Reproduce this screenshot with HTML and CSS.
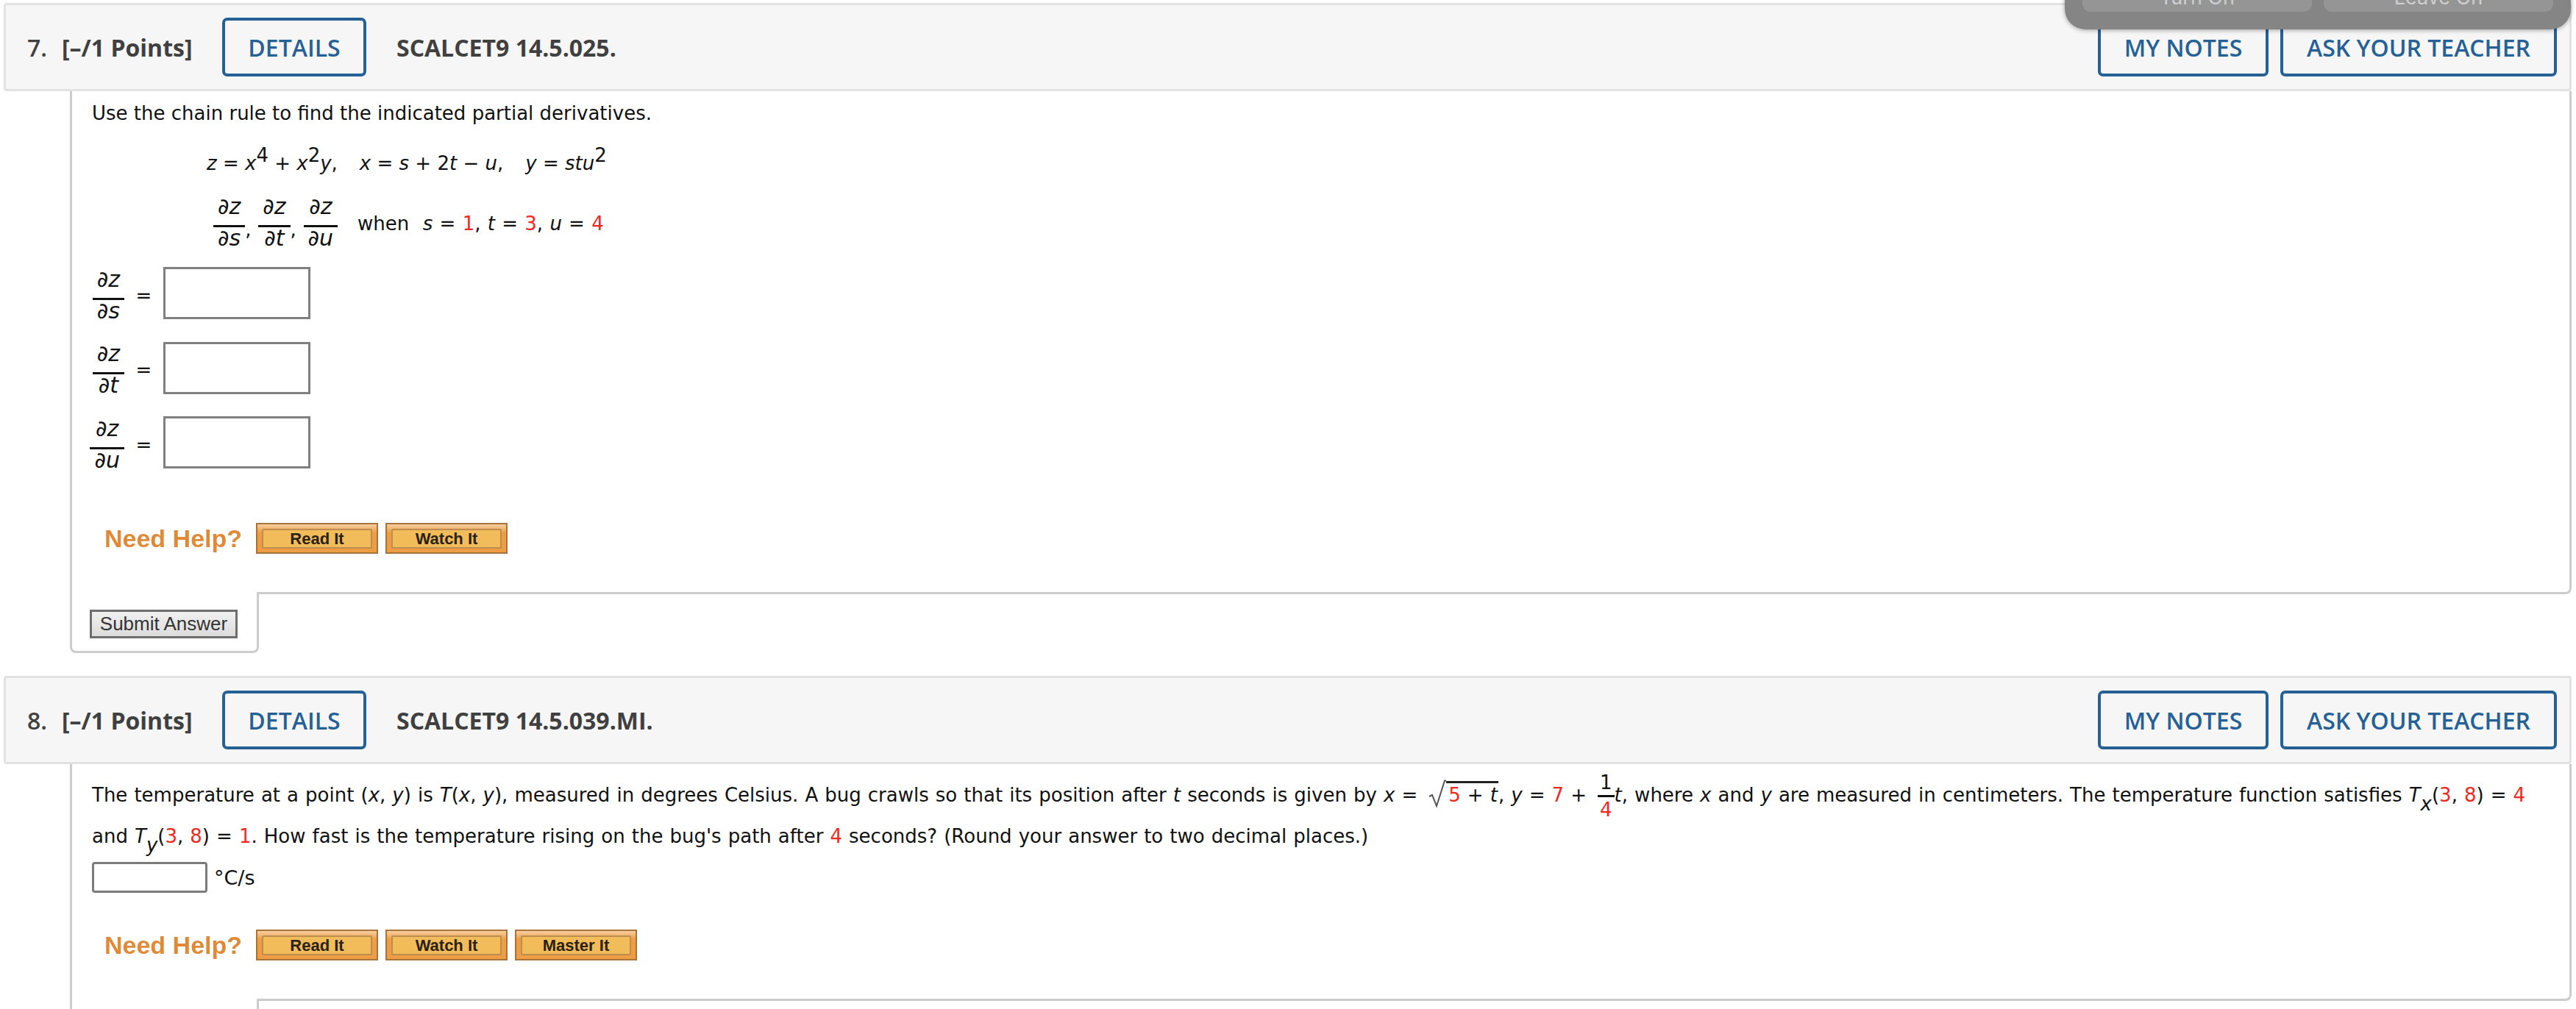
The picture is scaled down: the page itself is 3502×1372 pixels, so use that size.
FILE: index.html
```html
<!DOCTYPE html>
<html lang="en">
<head>
  <meta charset="UTF-8">
  <meta name="viewport" content="width=device-width, initial-scale=1.0">
  <title>SCALCET9 14.5 Assignment</title>
  <link rel="stylesheet" href="styles.css">
</head>
<body>
  <div class="question">
    <div class="q-head">
      <span class="q-num">7.</span>
      <span class="q-points">[&ndash;/1 Points]</span>
      <a class="head-btn details-btn">DETAILS</a>
      <span class="q-code">SCALCET9 14.5.025.</span>
      <a class="head-btn notes-btn">MY NOTES</a>
      <a class="head-btn ask-btn">ASK YOUR TEACHER</a>
    </div>
    <div class="q-body">
      <p class="intro">Use the chain rule to find the indicated partial derivatives.</p>
      <p class="formula"><i>z</i> = <i>x</i><sup>4</sup> + <i>x</i><sup>2</sup><i>y</i>,<span class="sep"></span><i>x</i> = <i>s</i> + 2<i>t</i> &minus; <i>u</i>,<span class="sep"></span><i>y</i> = <i>stu</i><sup>2</sup></p>
      <div class="given">
        <span class="frac"><i class="num">&part;z</i><i class="den">&part;s</i></span><span class="comma">,</span>
        <span class="frac"><i class="num">&part;z</i><i class="den">&part;t</i></span><span class="comma">,</span>
        <span class="frac"><i class="num">&part;z</i><i class="den">&part;u</i></span>
        <span class="when">when&nbsp; <i>s</i> = <b>1</b>, <i>t</i> = <b>3</b>, <i>u</i> = <b>4</b></span>
      </div>
      <div class="answers">
        <div class="ans-row">
          <span class="ans-label"><span class="frac"><i class="num">&part;z</i><i class="den">&part;s</i></span></span>
          <span class="eq">=</span>
          <input class="ans-box" type="text">
        </div>
        <div class="ans-row">
          <span class="ans-label"><span class="frac"><i class="num">&part;z</i><i class="den">&part;t</i></span></span>
          <span class="eq">=</span>
          <input class="ans-box" type="text">
        </div>
        <div class="ans-row">
          <span class="ans-label"><span class="frac"><i class="num">&part;z</i><i class="den">&part;u</i></span></span>
          <span class="eq">=</span>
          <input class="ans-box" type="text">
        </div>
      </div>
      <div class="help help-first">
        <span class="help-label">Need Help?</span>
        <span class="help-btn"><span>Read It</span></span>
        <span class="help-btn"><span>Watch It</span></span>
      </div>
    </div>
    <div class="submit-tab">
      <button class="submit-btn" type="button">Submit Answer</button>
    </div>
  </div>

  <div class="question second">
    <div class="q-head">
      <span class="q-num">8.</span>
      <span class="q-points">[&ndash;/1 Points]</span>
      <a class="head-btn details-btn">DETAILS</a>
      <span class="q-code">SCALCET9 14.5.039.MI.</span>
      <a class="head-btn notes-btn">MY NOTES</a>
      <a class="head-btn ask-btn">ASK YOUR TEACHER</a>
    </div>
    <div class="q-body">
      <p class="prose">The temperature at a point (<i>x</i>, <i>y</i>) is <i>T</i>(<i>x</i>, <i>y</i>), measured in degrees Celsius. A bug crawls so that its position after <i>t</i> seconds is given by <i>x</i> = <span class="root"><svg class="root-sign" width="24" height="38" viewBox="0 0 24 38"><path d="M1 23 L5 21 L11 36 L22 1.5 L24 1.5" fill="none" stroke="#555" stroke-width="2"/></svg><span class="root-body"><b>5</b> + <i>t</i></span></span>, <i>y</i> = <b>7</b> + <span class="frac small"><span class="num">1</span><b class="den">4</b></span><i>t</i>, where <i>x</i> and <i>y</i> are measured in centimeters. The temperature function satisfies <i>T</i><sub><i>x</i></sub>(<b>3</b>, <b>8</b>) = <b>4</b><br>and <i>T</i><sub><i>y</i></sub>(<b>3</b>, <b>8</b>) = <b>1</b>. How fast is the temperature rising on the bug's path after <b>4</b> seconds? (Round your answer to two decimal places.)</p>
      <div class="unit-row">
        <input class="unit-box" type="text">
        <span class="unit">&deg;C/s</span>
      </div>
      <div class="help help-second">
        <span class="help-label">Need Help?</span>
        <span class="help-btn"><span>Read It</span></span>
        <span class="help-btn"><span>Watch It</span></span>
        <span class="help-btn"><span>Master It</span></span>
      </div>
    </div>
    <div class="submit-tab tab-clipped"></div>
  </div>

  <!-- browser popup hanging over the top right corner -->
  <div class="popup">
    <span class="popup-btn">Turn On</span>
    <span class="popup-btn">Leave On</span>
  </div>
</body>
</html>
```

FILE: styles.css
```css
body {
  margin: 0;
  width: 3502px;
  height: 1372px;
  padding-top: 4px;
  box-sizing: border-box;
  overflow: hidden;
  position: relative;
  background: white;
  color: #111;
  font-family: "DejaVu Sans", Verdana, sans-serif;
  font-size: 26px;
}

p {
  margin: 0;
}

.question {
  margin: 0 6px 0 5px;
}

.second {
  margin-top: 31px;
}

/* header bar */
.q-head {
  display: flex;
  align-items: center;
  height: 120px;
  box-sizing: border-box;
  padding: 0 17px 0 29px;
  background: #f6f6f6;
  border: 3px solid #e2e2e2;
  border-radius: 4px;
  color: #404040;
  font-family: "Open Sans", sans-serif;
  font-size: 32px;
  font-weight: 600;
}

.q-num {
  width: 47px;
}

.q-points {
  width: 218px;
  font-weight: 700;
}

.head-btn {
  display: flex;
  align-items: center;
  justify-content: center;
  height: 80px;
  box-sizing: border-box;
  border: 4px solid #266196;
  border-radius: 7px;
  color: #266196;
}

.details-btn {
  width: 196px;
}

.q-code {
  flex: 1;
  margin-left: 41px;
  font-weight: 700;
}

.notes-btn {
  width: 232px;
  margin-right: 16px;
}

.ask-btn {
  width: 376px;
}

/* question panel */
.q-body {
  margin-left: 90px;
  padding: 14px 0 52px 27px;
  border: 3px solid #cccccc;
  border-top: none;
  border-radius: 0 0 8px 0;
}

.intro {
  line-height: 32px;
}

.formula {
  margin: 36px 0 0 156px;
  line-height: 32px;
}

.sep {
  display: inline-block;
  width: 30px;
}

sup {
  font-size: 26px;
  line-height: 0;
  vertical-align: 11px;
}

sub {
  font-size: 26px;
  line-height: 0;
  vertical-align: -12px;
}

b {
  color: #f0291e;
  font-weight: normal;
}

.frac {
  display: inline-flex;
  flex-direction: column;
  align-items: stretch;
  font-size: 30px;
  text-align: center;
}

.frac .num {
  padding: 0 6px 6px;
  line-height: 39px;
  border-bottom: 3px solid #111;
}

.frac .den {
  padding: 0 6px;
  line-height: 30px;
}

.given {
  display: flex;
  align-items: center;
  height: 81px;
  margin: 28px 0 0 165px;
}

.given .frac {
  margin-bottom: 13px;
}

.comma {
  width: 18px;
  padding-top: 10px;
}

.when {
  margin-left: 27px;
  padding-bottom: 6px;
  word-spacing: 1px;
}

.answers {
  display: flex;
  flex-direction: column;
  gap: 30.5px;
  margin-top: 16px;
}

.ans-row {
  display: flex;
  align-items: center;
  height: 71px;
}

.ans-label {
  display: flex;
  justify-content: flex-end;
  width: 44px;
}

.eq {
  width: 53px;
  margin-top: 6px;
  text-align: center;
}

.ans-box {
  width: 200px;
  height: 71px;
  box-sizing: border-box;
  margin: 0;
  border: 3px solid #808080;
  background: white;
}

/* need help strip */
.help {
  display: flex;
  align-items: center;
  gap: 10px;
  margin-left: 17px;
}

.help-first {
  margin-top: 74px;
}

.help-second {
  margin-top: 50px;
}

.help-label {
  width: 196px;
  color: #e08a38;
  font-family: "Liberation Sans", Arial, sans-serif;
  font-size: 34px;
  font-weight: bold;
  filter: blur(0.4px);
}

.help-btn {
  display: flex;
  width: 166px;
  height: 42px;
  box-sizing: border-box;
  padding: 6px 6px 5px;
  border: 2px solid #a87338;
  background: linear-gradient(#f6cfa0, #ee9d44 30%);
  font-family: "Liberation Sans", Arial, sans-serif;
  font-size: 22px;
  font-weight: bold;
  color: #2a2110;
}

.help-btn span {
  flex: 1;
  display: flex;
  align-items: center;
  justify-content: center;
  border: 2px solid #bd8c4f;
  border-radius: 2px;
  background: #f3bc5b;
}

/* notch with the submit button */
.submit-tab {
  position: relative;
  width: 257px;
  box-sizing: border-box;
  margin: -3px 0 0 90px;
  padding: 24px 0 17px 24px;
  background: white;
  border: 3px solid #cccccc;
  border-top: none;
  border-radius: 0 0 8px 8px;
}

.tab-clipped {
  height: 90px;
}

.submit-btn {
  display: block;
  width: 201px;
  height: 39px;
  padding: 0;
  border: 3px solid #6e6e6e;
  background: linear-gradient(#f0f0f0, #dcdcdc);
  color: #333;
  font-family: "Liberation Sans", Arial, sans-serif;
  font-size: 26px;
}

/* second question text */
.prose {
  line-height: 56px;
  word-spacing: 0.8px;
}

.root {
  display: inline-block;
  margin-left: 8px;
  line-height: 32px;
}

.root-sign {
  vertical-align: -8px;
  margin-left: -2px;
}

.root-body {
  display: inline-block;
  padding: 0 1px 0 3px;
  border-top: 3px solid #222;
}

.small {
  font-size: 26px;
  vertical-align: middle;
  margin: -20px 0 -20px 6px;
}

.small .num,
.small .den {
  padding: 0 3px;
  line-height: 34px;
}

.unit-row {
  display: flex;
  align-items: center;
  gap: 9px;
  margin-top: 7px;
}

.unit {
  font-size: 27px;
}

.unit-box {
  width: 157px;
  height: 42px;
  box-sizing: border-box;
  margin: 0;
  border: 3px solid #7b7b7b;
  border-radius: 4px;
  background: white;
}

/* popup */
.popup {
  position: absolute;
  top: -40px;
  left: 2807px;
  display: flex;
  gap: 16px;
  width: 688px;
  height: 80px;
  box-sizing: border-box;
  padding: 0 24px 24px;
  background: #858586;
  border-radius: 0 0 28px 28px;
  box-shadow: 0 1px 6px rgba(0, 0, 0, 0.35);
}

.popup-btn {
  flex: 1;
  display: flex;
  align-items: flex-end;
  justify-content: center;
  height: 56px;
  padding-bottom: 11px;
  box-sizing: border-box;
  background: #959596;
  border-radius: 0 0 11px 11px;
  color: #cfcfcf;
  font-family: Inter, sans-serif;
  font-size: 27px;
  line-height: 0.6;
}
```
